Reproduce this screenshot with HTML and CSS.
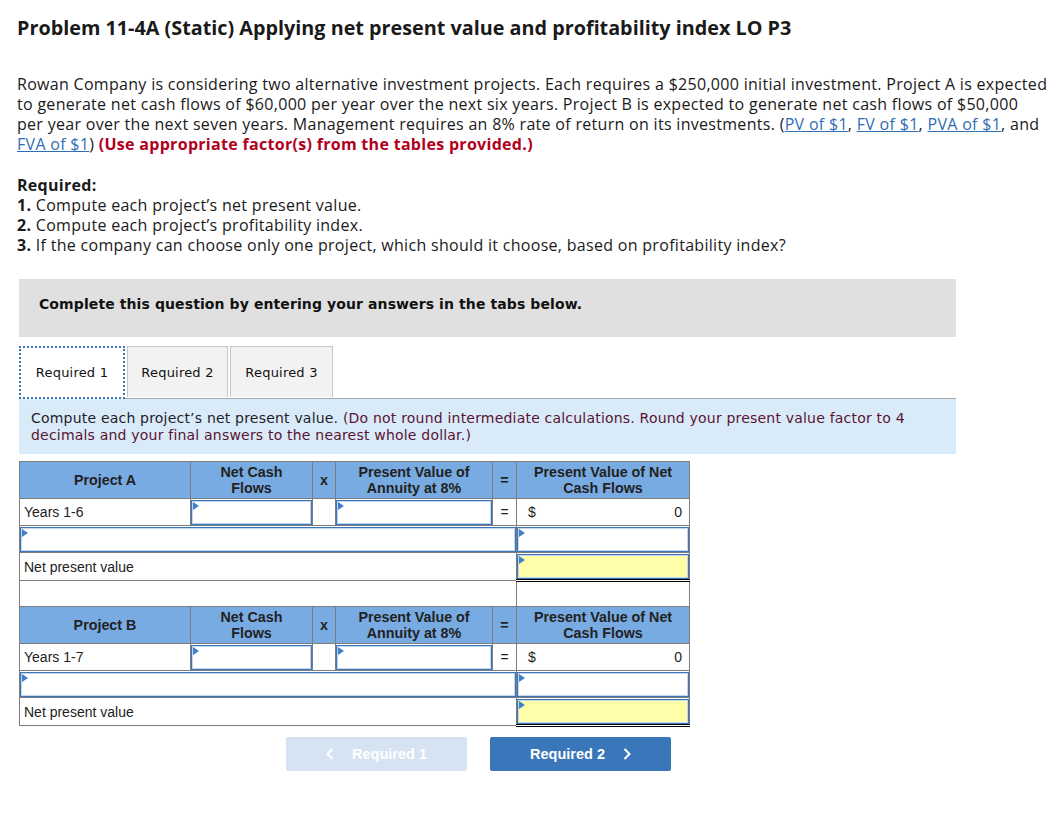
FILE: index.html
```html
<!DOCTYPE html>
<html>
<head>
<meta charset="utf-8">
<link rel="stylesheet" href="styles.css">
</head>
<body>
<div class="page">
  <h1 class="title">Problem 11-4A (Static) Applying net present value and profitability index LO P3</h1>
  <p class="intro">Rowan Company is considering two alternative investment projects. Each requires a $250,000 initial investment. Project A is expected to generate net cash flows of $60,000 per year over the next six years. Project B is expected to generate net cash flows of $50,000 per year over the next seven years. Management requires an 8% rate of return on its investments. (<a href="#">PV of $1</a>, <a href="#">FV of $1</a>, <a href="#">PVA of $1</a>, and <a href="#">FVA of $1</a>) <strong class="warn">(Use appropriate factor(s) from the tables provided.)</strong></p>
  <div class="required">
    <div class="req-head">Required:</div>
    <div><b>1.</b> Compute each project’s net present value.</div>
    <div><b>2.</b> Compute each project’s profitability index.</div>
    <div><b>3.</b> If the company can choose only one project, which should it choose, based on profitability index?</div>
  </div>

  <div class="question">
    <div class="banner">Complete this question by entering your answers in the tabs below.</div>
    <div class="tabs">
      <div class="tab active">Required 1</div>
      <div class="tab">Required 2</div>
      <div class="tab">Required 3</div>
    </div>
    <div class="prompt">Compute each project’s net present value. <span class="note">(Do not round intermediate calculations. Round your present value factor to 4 decimals and your final answers to the nearest whole dollar.)</span></div>

    <table class="grid">
      <colgroup>
        <col class="c1"><col class="c2"><col class="c3"><col class="c4"><col class="c5"><col class="c6">
      </colgroup>
      <tr class="head">
        <th>Project A</th>
        <th>Net Cash<br>Flows</th>
        <th>x</th>
        <th>Present Value of<br>Annuity at 8%</th>
        <th>=</th>
        <th>Present Value of Net<br>Cash Flows</th>
      </tr>
      <tr class="row">
        <td class="label">Years 1-6</td>
        <td class="in"><div class="field"></div></td>
        <td></td>
        <td class="in"><div class="field"></div></td>
        <td class="eq">=</td>
        <td class="amt"><span>$</span><span>0</span></td>
      </tr>
      <tr class="row">
        <td class="in" colspan="5"><div class="field"></div></td>
        <td class="in"><div class="field"></div></td>
      </tr>
      <tr class="row npvrow">
        <td class="label" colspan="5">Net present value</td>
        <td class="in total"><div class="field yellow"></div></td>
      </tr>
      <tr class="spacer">
        <td colspan="5"></td>
        <td class="after"></td>
      </tr>
      <tr class="head">
        <th>Project B</th>
        <th>Net Cash<br>Flows</th>
        <th>x</th>
        <th>Present Value of<br>Annuity at 8%</th>
        <th>=</th>
        <th>Present Value of Net<br>Cash Flows</th>
      </tr>
      <tr class="row">
        <td class="label">Years 1-7</td>
        <td class="in"><div class="field"></div></td>
        <td></td>
        <td class="in"><div class="field"></div></td>
        <td class="eq">=</td>
        <td class="amt"><span>$</span><span>0</span></td>
      </tr>
      <tr class="row">
        <td class="in" colspan="5"><div class="field"></div></td>
        <td class="in"><div class="field"></div></td>
      </tr>
      <tr class="row npvrow">
        <td class="label" colspan="5">Net present value</td>
        <td class="in total last"><div class="field yellow"></div></td>
      </tr>
    </table>

    <div class="nav">
      <button class="btn prev"><svg class="chev" width="8" height="12" viewBox="0 0 8 12"><polyline points="6.5,1 1.5,6 6.5,11" fill="none" stroke="#fff" stroke-width="2"/></svg><span>Required 1</span></button>
      <button class="btn next"><span>Required 2</span><svg class="chev" width="8" height="12" viewBox="0 0 8 12"><polyline points="1.5,1 6.5,6 1.5,11" fill="none" stroke="#fff" stroke-width="2"/></svg></button>
    </div>
  </div>
</div>
</body>
</html>
```
FILE: styles.css
```css
html, body {
  margin: 0;
  padding: 0;
  background: #ffffff;
}
.page {
  padding: 16px 14px 40px 17px;
  font-family: "Open Sans", Lato, sans-serif;
  color: #1a1a1a;
}
.title {
  margin: 0;
  font-size: 19.8px;
  line-height: 24px;
  font-weight: 700;
  color: #1a1a1a;
}
.intro {
  margin: 34px 0 0 0;
  font-size: 16px;
  letter-spacing: 0.3px;
  line-height: 20px;
}
.intro a {
  color: #2f6db5;
  text-decoration: underline;
}
.warn {
  color: #b1001c;
  font-weight: 700;
}
.required {
  margin-top: 21px;
  font-size: 16px;
  letter-spacing: 0.3px;
  line-height: 20px;
}
.req-head {
  font-weight: 700;
}
.question {
  margin: 24px 0 0 2px;
  width: 937px;
}
.banner {
  background: #e0e0e0;
  height: 58px;
  box-sizing: border-box;
  padding: 17px 0 0 20px;
  font-family: "DejaVu Sans", Verdana, sans-serif;
  font-weight: 700;
  font-size: 14px;
  letter-spacing: 0.1px;
  color: #111;
}
.tabs {
  display: flex;
  margin-top: 9px;
  border-bottom: 1px solid #a8a8a8;
  gap: 2px;
}
.tab {
  height: 51px;
  box-sizing: border-box;
  padding: 0;
  display: flex;
  align-items: center;
  justify-content: center;
  white-space: nowrap;
  background: #f2f2f2;
  border: 1px solid #c6c6c6;
  border-bottom: none;
  font-family: "DejaVu Sans", Verdana, sans-serif;
  font-size: 13px;
  letter-spacing: 0.2px;
  color: #111;
}
.tab.active {
  background: #fff;
  border: 2px dotted #3f74b8;
  width: 106px;
  margin-bottom: -1px;
  height: 53px;
}
.tab:nth-child(2) { width: 101px; }
.tab:nth-child(3) { width: 103px; }
.prompt {
  background: #d9ebf8;
  height: 55px;
  box-sizing: border-box;
  padding: 11px 10px 0 12px;
  font-family: "DejaVu Sans", Verdana, sans-serif;
  font-size: 14px;
  letter-spacing: 0.2px;
  line-height: 17px;
  color: #1e1e2a;
}
.note {
  color: #5a1433;
}
.grid {
  margin-top: 7px;
  border-collapse: collapse;
  table-layout: fixed;
  width: 670px;
  font-family: "Liberation Sans", Arial, sans-serif;
  font-size: 14px;
  color: #222;
}
.c1 { width: 171px; }
.c2 { width: 122px; }
.c3 { width: 23px; }
.c4 { width: 157px; }
.c5 { width: 24px; }
.c6 { width: 173px; }
.grid th, .grid td {
  border: 1px solid #7d7d7d;
  padding: 0;
}
.grid th {
  background: #78abe2;
  height: 36px;
  font-weight: 700;
  font-size: 14.3px;
  line-height: 16px;
  color: #222;
}
.grid tr.row td {
  height: 26px;
}
.grid tr.npvrow td {
  height: 26px;
}
.grid tr.spacer td {
  height: 24px;
}
.grid tr.spacer td.after {
  border-top: 3px double #000;
}
.label {
  padding-left: 4px !important;
  font-size: 14px;
}
.in {
  position: relative;
}
.field {
  height: 25px;
  box-sizing: border-box;
  border: 1px solid #3e75b8;
  box-shadow: inset 0 0 0 1px #c3d8ef;
  background: #fff;
  position: relative;
}
.field::before {
  content: "";
  position: absolute;
  left: 1px;
  top: 1px;
  border-top: 4px solid transparent;
  border-bottom: 4px solid transparent;
  border-left: 6px solid #3f7fcb;
}
.field.yellow {
  background: #ffffaa;
}
.grid td.total {
  border-top: 1px solid #000;
  border-bottom: 3px double #000;
}
.eq {
  text-align: center;
  font-size: 14px;
}
.amt {
  padding: 0 7px 0 11px !important;
}
.amt span:first-child {
  float: left;
}
.amt span:last-child {
  float: right;
}
.nav {
  display: flex;
  gap: 23px;
  margin: 10px 0 0 267px;
}
.btn {
  width: 181px;
  height: 34px;
  border: none;
  border-radius: 2px;
  font-family: "Liberation Sans", Arial, sans-serif;
  font-weight: 700;
  font-size: 14.5px;
  color: #fff;
  display: flex;
  align-items: center;
  justify-content: center;
  gap: 18px;
  padding: 0;
}
.btn.prev {
  background: #d6e3f2;
}
.btn.next {
  background: #3a76ba;
}
.chev {
  display: block;
}
```
